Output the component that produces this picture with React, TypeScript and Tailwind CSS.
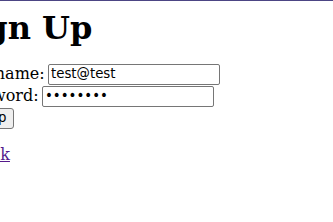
import React from 'react';

// Sign up page, scrolled so its left edge is out of view
export default function App() {
  return (
    <div className="h-screen overflow-hidden bg-white text-black font-['DejaVu_Serif',serif]">
      <div className="h-px bg-[#4c4584]" />
      <div className="ml-[-44px]">
        <h1 className="ml-[-6px] mt-[9px] mb-[16px] text-[32px] font-bold leading-[37px] whitespace-nowrap">
          Sign Up
        </h1>
        <form className="text-base leading-[22px]">
          <div className="flex items-center h-[22px] whitespace-nowrap">
            <label className="w-[92px]">Username: </label>
            <input
              type="text"
              defaultValue="test@test"
              className="w-[172px] h-[21px] px-[2px] border border-[#767676] rounded-[2px] font-['DejaVu_Sans',sans-serif] text-[13.33px] text-black"
            />
          </div>
          <div className="flex items-center h-[22px] whitespace-nowrap">
            <label className="w-[86px]">Password: </label>
            <input
              type="password"
              defaultValue="password"
              className="w-[172px] h-[21px] px-[2px] border border-[#767676] rounded-[2px] font-['DejaVu_Sans',sans-serif] text-[13.33px] text-black"
            />
          </div>
          <div className="flex items-center h-[22px]">
            <button
              type="button"
              className="ml-[-8px] h-[21px] px-[6px] bg-[#efefef] border border-[#767676] rounded-[3px] font-['DejaVu_Sans',sans-serif] text-[13.33px] leading-none whitespace-nowrap"
            >
              Sign Up
            </button>
          </div>
        </form>
        <p className="mt-[14px] ml-[14px]">
          <a href="#" className="text-[#551a8b] underline">Back</a>
        </p>
      </div>
    </div>
  );
}
